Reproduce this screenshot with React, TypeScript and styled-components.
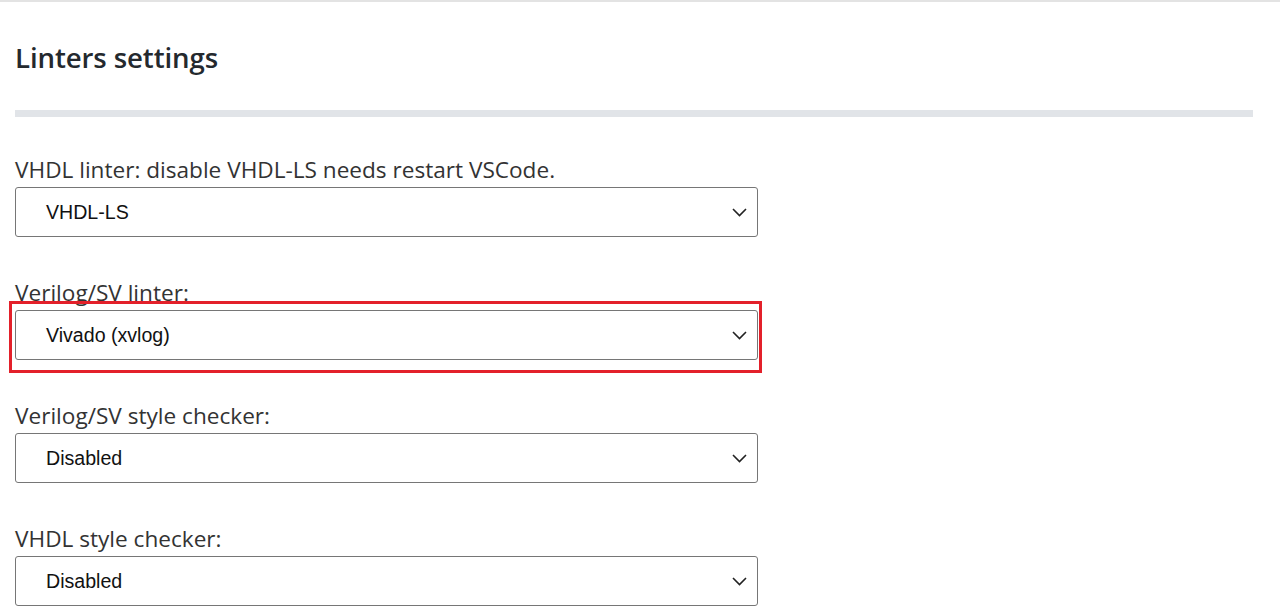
import React from 'react'
import styled, { createGlobalStyle } from 'styled-components'

const GlobalStyle = createGlobalStyle`
  html, body {
    margin: 0;
    padding: 0;
    background: #ffffff;
  }
  body {
    font-family: 'Open Sans', 'Noto Sans', sans-serif;
  }
`

const fields = [
  { label: 'VHDL linter: disable VHDL-LS needs restart VSCode.', value: 'VHDL-LS' },
  { label: 'Verilog/SV linter:', value: 'Vivado (xvlog)', marked: true },
  { label: 'Verilog/SV style checker:', value: 'Disabled' },
  { label: 'VHDL style checker:', value: 'Disabled' },
]

const Chevron = () => (
  <svg width="15" height="9" viewBox="0 0 15 9" fill="none">
    <polyline points="1,1 7.5,7.5 14,1" stroke="#222" strokeWidth="1.6" />
  </svg>
)

const App = () => {
  return (
    <Page>
      <GlobalStyle />
      <Title>Linters settings</Title>
      <Rule />
      <Form>
        {fields.map((f) => (
          <Field key={f.label}>
            <Label>{f.label}</Label>
            <SelectBox $marked={f.marked}>
              <span>{f.value}</span>
              <Chevron />
            </SelectBox>
          </Field>
        ))}
      </Form>
    </Page>
  )
}

const Page = styled.div`
  border-top: 2px solid #e3e3e3;
  padding: 0 27px 0 15px;
  height: 605px;
  overflow: hidden;
`
const Title = styled.h2`
  margin: 37px 0 0;
  font-size: 27.6px;
  font-weight: 600;
  line-height: 36px;
  color: #24292e;
  letter-spacing: -0.1px;
`
const Rule = styled.div`
  margin-top: 35px;
  height: 7px;
  background: #e1e4e8;
`
const Form = styled.div`
  display: flex;
  flex-direction: column;
  gap: 41px;
  margin-top: 38px;
`
const Field = styled.div`
  display: flex;
  flex-direction: column;
  gap: 3px;
`
const Label = styled.div`
  font-size: 22.6px;
  line-height: 29px;
  color: #333333;
`
const SelectBox = styled.div<{ $marked?: boolean }>`
  position: relative;
  box-sizing: border-box;
  width: 743px;
  height: 50px;
  border: 1px solid #767676;
  border-radius: 3px;
  display: flex;
  align-items: center;
  justify-content: space-between;
  padding: 0 10px 0 30px;
  font-family: 'Liberation Sans', Arial, sans-serif;
  font-size: 19.6px;
  color: #111;
  &::after {
    content: '';
    display: ${(p) => (p.$marked ? 'block' : 'none')};
    position: absolute;
    left: -7px;
    right: -5px;
    top: -10px;
    bottom: -14px;
    border: 3px solid #e3202a;
  }
`

export default App
